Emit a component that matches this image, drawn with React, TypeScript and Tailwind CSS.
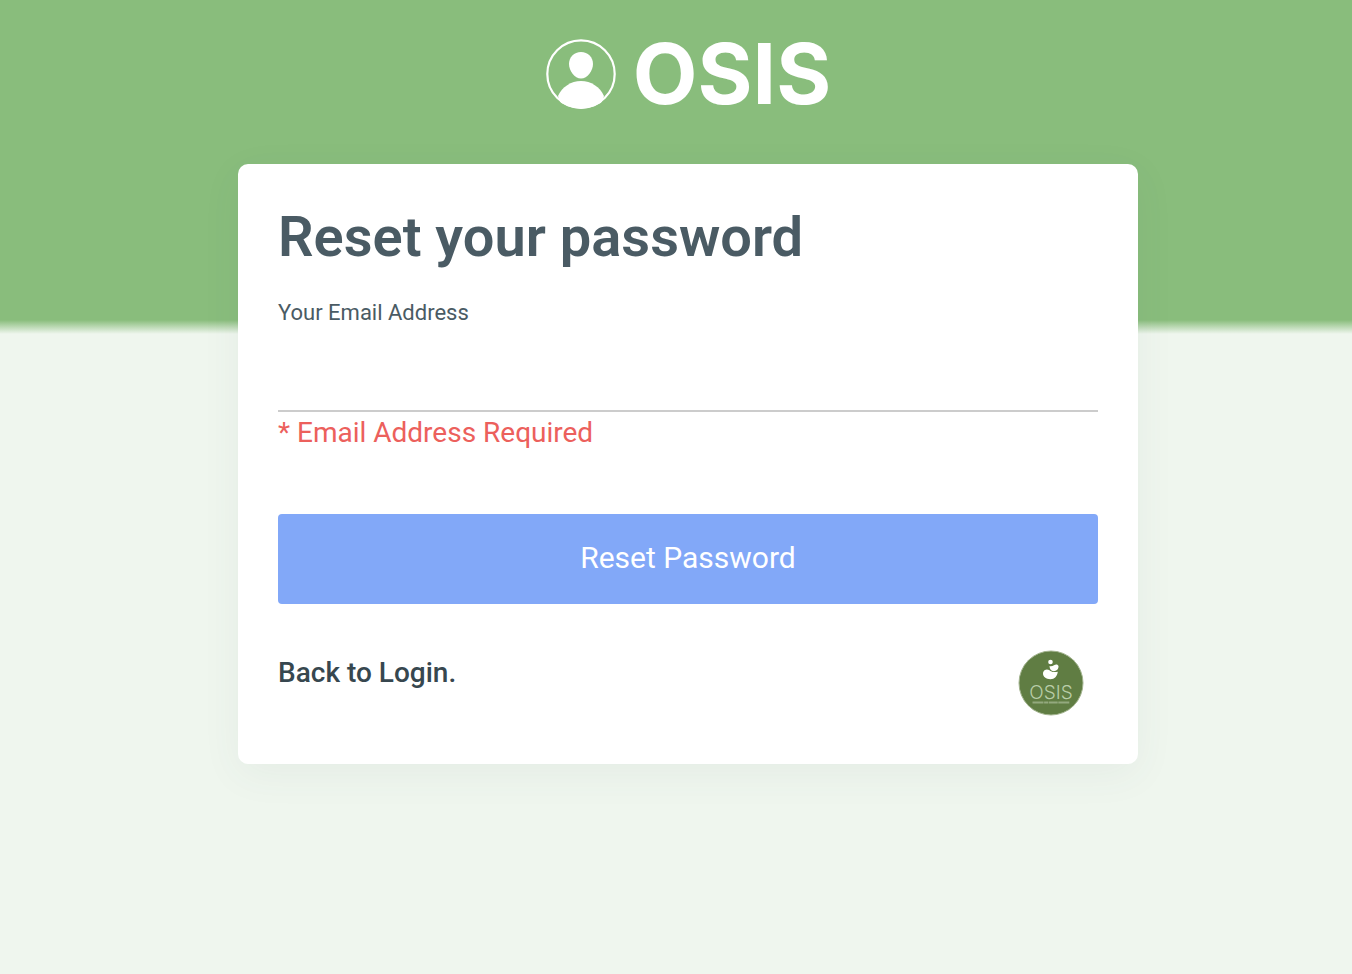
function Wordmark() {
  return (
    <div className="flex items-center gap-4 text-white">
      <svg viewBox="0 0 72 72" className="size-[72px]" aria-hidden="true">
        <defs>
          <clipPath id="badge">
            <circle cx="36" cy="36" r="35" />
          </clipPath>
        </defs>
        <circle cx="36" cy="36" r="33.7" fill="none" stroke="currentColor" strokeWidth="2.2" />
        <path
          fill="currentColor"
          d="M36 14c7 0 12 5 12 12 0 6.500-5.500 14.500-12 14.500s-12-8-12-14.500c0-7 5-12 12-12z"
        />
        <path
          clipPath="url(#badge)"
          fill="currentColor"
          d="M13 58C17 49 26 43 36 43S55 49 59 58L54 72H18z"
        />
      </svg>
      <span className="font-['Inter',sans-serif] text-[84px] leading-[72px] font-bold">OSIS</span>
    </div>
  );
}

function Seal() {
  return (
    <svg viewBox="0 0 66 66" className="size-[66px]" role="img" aria-label="OSIS">
      <circle cx="33" cy="33" r="32" fill="#607d43" stroke="#a3b48f" strokeWidth="1" />
      <circle cx="32.500" cy="12" r="2.300" fill="#fff" />
      <path
        fill="#fff"
        d="M31.500 16c1.500 .5 3 .2 4.500-.8 1.500-1.200 4-1.200 4.500.8.3 3-2 5.200-4.800 5.200-2.600 0-4-2-4.200-5.200z"
      />
      <path
        fill="#fff"
        d="M26.500 20.200c2.500-1.700 4.800-.4 6.500 1 2 1.200 4.500 1 6.800.6-.5 4.500-3.300 7.400-7.300 7.400-4.500 0-7.500-2.500-7.500-5.700 0-1.400.6-2.500 1.500-3.300z"
      />
      <text
        x="33"
        y="48.500"
        textAnchor="middle"
        fill="#b9cda8"
        className="font-['Inter',sans-serif] text-[19px] font-light"
      >
        OSIS
      </text>
      <path d="M14.500 52.500h37" stroke="#93a97e" strokeWidth="2" strokeDasharray="11 .6 4 .6 9 .6" />
    </svg>
  );
}

export default function App() {
  return (
    <div className="flex min-h-screen flex-col items-center bg-[linear-gradient(to_bottom,#89bd7c_320px,#eff6ee_334px)] pt-[38px] pr-4 pb-10 pl-10 font-['Roboto',sans-serif] text-[#4a5b64]">
      <Wordmark />
      <main className="mt-[54px] w-full max-w-[900px] rounded-[10px] bg-white px-10 pt-[41px] pb-12 shadow-[0_10px_40px_rgba(74,91,100,0.06)]">
        <form onSubmit={(e) => e.preventDefault()}>
          <h1 className="text-[56px] leading-16 font-semibold">Reset your password</h1>
          <label htmlFor="email" className="mt-7 block text-[22px] leading-8">
            Your Email Address
          </label>
          <input
            id="email"
            type="email"
            aria-describedby="email-error"
            className="mt-[11px] block h-[72px] w-full border-b-2 border-[#cccccc] text-[28px] outline-none"
          />
          <p id="email-error" className="text-[28px] leading-[42px] text-[#ec605c]">
            * Email Address Required
          </p>
          <button
            type="submit"
            className="mt-[60px] block h-[90px] w-full rounded-[4px] bg-[#82a8f8] pb-1 text-[30px] text-white"
          >
            Reset Password
          </button>
        </form>
        <div className="mt-[46px] flex items-start justify-between pr-[14px]">
          <a href="#login" className="text-[28px] leading-[46px] font-medium text-[#37474f]">
            Back to Login.
          </a>
          <Seal />
        </div>
      </main>
    </div>
  );
}
